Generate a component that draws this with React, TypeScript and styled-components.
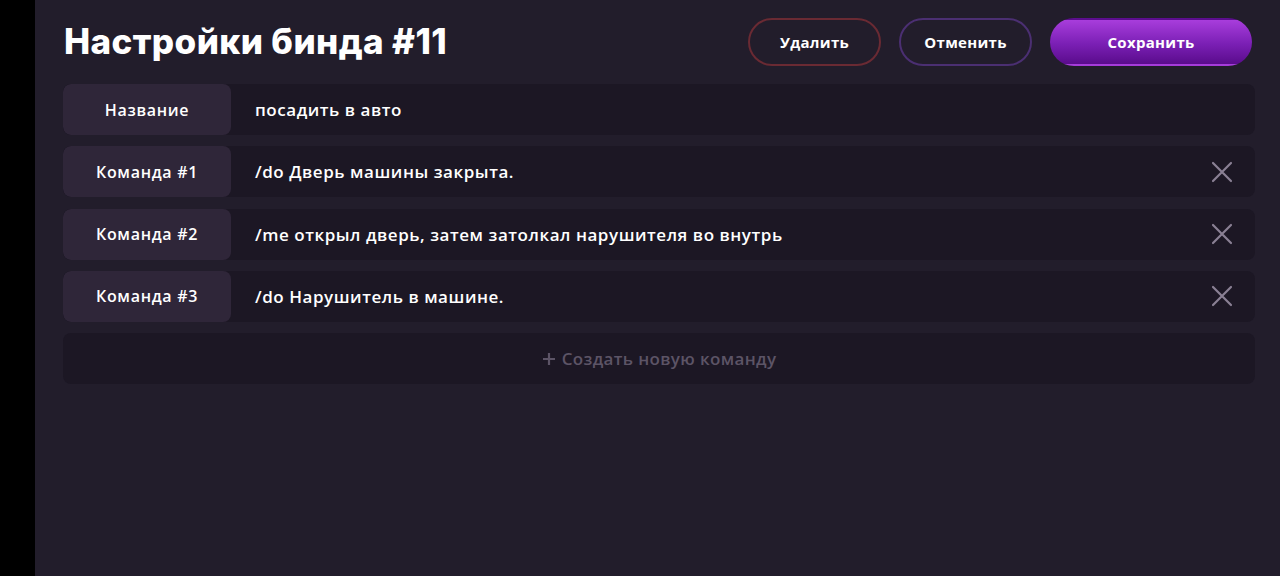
import React from "react";
import styled, { createGlobalStyle } from "styled-components";

const Global = createGlobalStyle`
  html, body { margin: 0; padding: 0; background: #000; }
  body { font-family: "Open Sans", "Noto Sans", sans-serif; }
  * { box-sizing: border-box; }
`;

const Page = styled.div`
  display: flex;
  width: 1280px;
  height: 576px;
  background: #000;
`;

const Side = styled.div`
  width: 35px;
  flex-shrink: 0;
  background: #000;
`;

const Main = styled.div`
  flex: 1;
  background: #221d2b;
  padding: 17px 25px 0 28px;
  display: flex;
  flex-direction: column;
`;

const Header = styled.div`
  display: flex;
  align-items: center;
  height: 49px;
  margin-bottom: 18px;
  padding-right: 3px;
`;

const Title = styled.h1`
  margin: 0;
  flex: 1;
  font-family: "Inter", sans-serif;
  font-size: 35px;
  font-weight: 800;
  color: #fff;
  letter-spacing: 0.4px;
  padding-left: 1px;
  margin-top: -2px;
`;

const Buttons = styled.div`
  display: flex;
  gap: 18px;
  align-items: center;
`;

const Btn = styled.button<{ $variant: "danger" | "ghost" | "primary" }>`
  height: 48px;
  border-radius: 24px;
  font-family: inherit;
  font-size: 15px;
  font-weight: 700;
  letter-spacing: 0.3px;
  color: #fff;
  cursor: pointer;
  width: ${(p) => (p.$variant === "primary" ? "202px" : "133px")};
  border: 2px solid
    ${(p) =>
      p.$variant === "danger"
        ? "#6a2a33"
        : p.$variant === "ghost"
        ? "#4b2f72"
        : "transparent"};
  background: ${(p) =>
    p.$variant === "primary"
      ? "linear-gradient(180deg, #a83ddc 0%, #7a1fb4 55%, #5a0c8c 100%)"
      : "transparent"};
`;

const List = styled.div`
  display: flex;
  flex-direction: column;
  gap: 11.3px;
`;

const Row = styled.div`
  display: flex;
  height: 51px;
  border-radius: 8px;
  background: #1c1724;
  overflow: hidden;
`;

const Label = styled.div`
  width: 168px;
  flex-shrink: 0;
  background: #2f2639;
  border-radius: 8px;
  display: flex;
  align-items: center;
  justify-content: center;
  color: #fff;
  font-size: 16px;
  font-weight: 600;
  letter-spacing: 0.7px;
`;

const Value = styled.div`
  flex: 1;
  display: flex;
  align-items: center;
  padding-left: 24px;
  color: #fff;
  font-size: 17px;
  font-weight: 600;
  letter-spacing: 0.55px;
`;

const Remove = styled.div`
  width: 68px;
  display: flex;
  align-items: center;
  justify-content: center;
  padding-left: 2px;
`;

const CreateRow = styled.div`
  height: 51px;
  border-radius: 8px;
  background: #1c1724;
  display: flex;
  align-items: center;
  justify-content: center;
  gap: 6px;
  color: #5c5466;
  font-size: 17px;
  font-weight: 600;
  letter-spacing: 0.35px;
`;

const XIcon = () => (
  <svg width="22" height="22" viewBox="0 0 22 22">
    <path d="M2 2 L20 20 M20 2 L2 20" stroke="#8a8094" strokeWidth="2.2" strokeLinecap="round" />
  </svg>
);

const PlusIcon = () => (
  <svg width="14" height="14" viewBox="0 0 14 14">
    <path d="M7 1 V13 M1 7 H13" stroke="#5c5466" strokeWidth="2.2" />
  </svg>
);

const commands = [
  "/do Дверь машины закрыта.",
  "/me открыл дверь, затем затолкал нарушителя во внутрь",
  "/do Нарушитель в машине.",
];

export default function App() {
  return (
    <Page>
      <Global />
      <Side />
      <Main>
        <Header>
          <Title>Настройки бинда #11</Title>
          <Buttons>
            <Btn $variant="danger">Удалить</Btn>
            <Btn $variant="ghost">Отменить</Btn>
            <Btn $variant="primary">Сохранить</Btn>
          </Buttons>
        </Header>
        <List>
          <Row>
            <Label>Название</Label>
            <Value>посадить в авто</Value>
          </Row>
          {commands.map((c, i) => (
            <Row key={i}>
              <Label>Команда #{i + 1}</Label>
              <Value>{c}</Value>
              <Remove>
                <XIcon />
              </Remove>
            </Row>
          ))}
          <CreateRow>
            <PlusIcon />
            Создать новую команду
          </CreateRow>
        </List>
      </Main>
    </Page>
  );
}
